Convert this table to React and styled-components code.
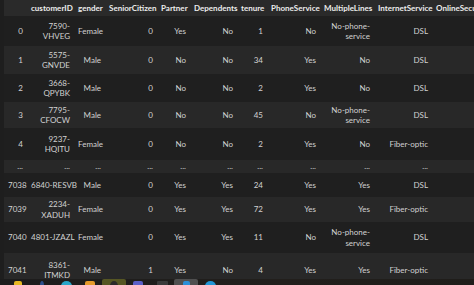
import React from "react";
import styled, { createGlobalStyle } from "styled-components";

const Global = createGlobalStyle`
  html, body { margin: 0; padding: 0; background: #1e1e1e; overflow: hidden; }
  #root { width: 474px; height: 285px; }
`;

const Page = styled.div`
  width: 474px;
  height: 285px;
  display: flex;
  flex-direction: column;
  background: #1e1e1e;
  overflow: hidden;
`;

const Output = styled.div`
  flex: 1;
  min-height: 0;
  overflow: hidden;
  padding-left: 4px;
`;

const Table = styled.table`
  table-layout: fixed;
  border-collapse: collapse;
  width: 488px;
  font-family: Lato, "Open Sans", sans-serif;
  font-size: 8px;
  line-height: 10.5px;
  color: #d2d2d2;
`;

const HeadRow = styled.tr`
  height: 16px;
  background: #2a2a2a;
`;

const Th = styled.th`
  padding: 0 4px;
  text-align: right;
  font-weight: 700;
  color: #ececec;
  white-space: nowrap;
  vertical-align: middle;
`;

const Row = styled.tr`
  height: ${(p) => p.$h}px;
  background: #1f1f1f;
  &:nth-child(even) { background: #282828; }
`;

const Td = styled.td`
  padding: 0 4px;
  text-align: right;
  vertical-align: middle;
  white-space: pre;
`;

const Taskbar = styled.div`
  height: 6px;
  flex: none;
  display: flex;
  align-items: flex-start;
  background: linear-gradient(90deg, #1c1c1c, #221f1c 60%, #1f1d1a);
  overflow: hidden;
  padding-left: 6px;
`;

const Slot = styled.div`
  width: 24px;
  height: 14px;
  flex: none;
  display: flex;
  justify-content: center;
  background: ${(p) => p.$bg || "transparent"};
  border-radius: 2px;
`;

const Icon = styled.div`
  width: ${(p) => p.$w || 10}px;
  height: 10px;
  margin-top: 2px;
  background: ${(p) => p.$c};
  border-radius: ${(p) => p.$r || "2px"};
`;

const cols = [
  { key: "", w: 23 },
  { key: "customerID", w: 47 },
  { key: "gender", w: 31 },
  { key: "SeniorCitizen", w: 52 },
  { key: "Partner", w: 33 },
  { key: "Dependents", w: 47 },
  { key: "tenure", w: 30 },
  { key: "PhoneService", w: 53 },
  { key: "MultipleLines", w: 54 },
  { key: "InternetService", w: 58 },
  { key: "OnlineSecurity", w: 60 },
];

const NP = "No-phone-\nservice";
const rows = [
  { h: 30, v: ["0", "7590-\nVHVEG", "Female", "0", "Yes", "No", "1", "No", NP, "DSL", "No"] },
  { h: 28, v: ["1", "5575-\nGNVDE", "Male", "0", "No", "No", "34", "Yes", "No", "DSL", "Yes"] },
  { h: 28, v: ["2", "3668-\nQPYBK", "Male", "0", "No", "No", "2", "Yes", "No", "DSL", "Yes"] },
  { h: 26, v: ["3", "7795-\nCFOCW", "Male", "0", "No", "No", "45", "No", NP, "DSL", "Yes"] },
  { h: 32, v: ["4", "9237-\nHQITU", "Female", "0", "No", "No", "2", "Yes", "No", "Fiber-optic", "No"] },
  { h: 13, v: Array(11).fill("...") },
  { h: 24, v: ["7038", "6840-RESVB", "Male", "0", "Yes", "Yes", "24", "Yes", "Yes", "DSL", "Yes"] },
  { h: 25, v: ["7039", "2234-\nXADUH", "Female", "0", "Yes", "Yes", "72", "Yes", "Yes", "Fiber-optic", "No"] },
  { h: 31, v: ["7040", "4801-JZAZL", "Female", "0", "Yes", "Yes", "11", "No", NP, "DSL", "Yes"] },
  { h: 34, v: ["7041", "8361-\nITMKD", "Male", "1", "Yes", "No", "4", "Yes", "Yes", "Fiber-optic", "No"] },
];

const icons = [
  { c: "#e8b923", w: 8 },
  { c: "#2c4f8c", w: 4, r: "50%" },
  { c: "#2aa6c9", w: 11, r: "50%" },
  { c: "#e59a2b", w: 10 },
  { c: "#2a2a2a", w: 8, r: "50%", bg: "#565623" },
  { c: "#5b5fc7", w: 10 },
  { c: "#3a3a3a", w: 11, r: "1px" },
  { c: "#2b8fd8", w: 7, bg: "#4f4f4f" },
  { c: "#2196d6", w: 11, r: "50%" },
];

export default function App() {
  return (
    <Page>
      <Global />
      <Output>
        <Table>
          <colgroup>
            {cols.map((c, i) => (
              <col key={i} style={{ width: c.w }} />
            ))}
          </colgroup>
          <thead>
            <HeadRow>
              {cols.map((c, i) => (
                <Th key={i}>{c.key}</Th>
              ))}
            </HeadRow>
          </thead>
          <tbody>
            {rows.map((r, i) => (
              <Row key={i} $h={r.h}>
                {r.v.map((v, j) => (
                  <Td key={j}>{v}</Td>
                ))}
              </Row>
            ))}
          </tbody>
        </Table>
      </Output>
      <Taskbar>
        {icons.map((ic, i) => (
          <Slot key={i} $bg={ic.bg}>
            <Icon $c={ic.c} $w={ic.w} $r={ic.r} />
          </Slot>
        ))}
      </Taskbar>
    </Page>
  );
}
